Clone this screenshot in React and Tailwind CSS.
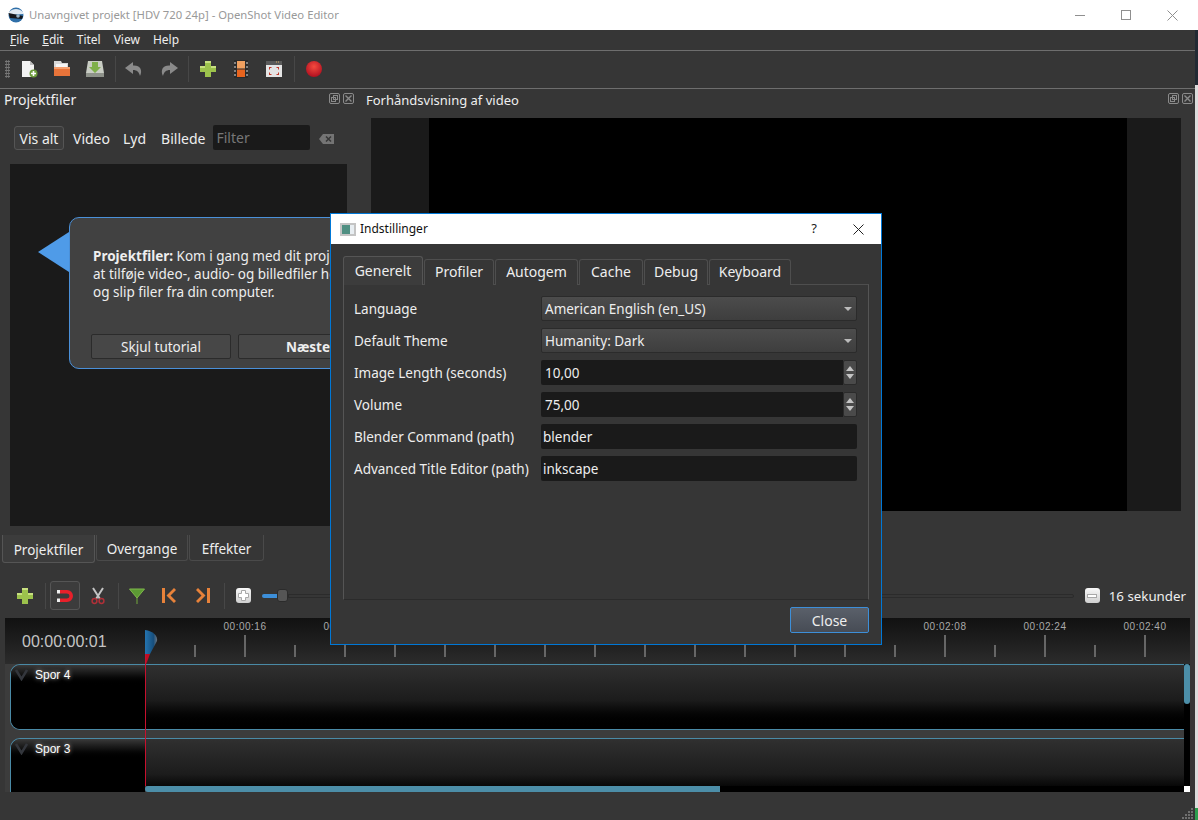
import React from "react";

const FONT = "font-['Noto_Sans',sans-serif]";

const Logo = () => (
  <svg width="16" height="16" viewBox="0 0 16 16">
    <circle cx="8" cy="8" r="7.5" fill="#2f6fa8" />
    <path d="M1 5 C5 1 11 1 15 5 L15 7 L1 8 Z" fill="#dfe9f2" />
    <path d="M0.5 6 L15 9 L14 12 L2 11 Z" fill="#15161a" />
    <circle cx="10" cy="9" r="1.8" fill="#9ab4c8" />
  </svg>
);

const NewFile = () => (
  <svg width="20" height="20" viewBox="0 0 20 20">
    <path d="M3 2 H11 L15 6 V18 H3 Z" fill="#f2f2f2" />
    <path d="M11 2 L15 6 H11 Z" fill="#bdbdbd" />
    <circle cx="14.5" cy="14.5" r="4" fill="#6d9c3c" />
    <path d="M14.5 12 V17 M12 14.5 H17" stroke="#fff" strokeWidth="1.6" />
  </svg>
);

const OpenFolder = () => (
  <svg width="20" height="20" viewBox="0 0 20 20">
    <path d="M2 2 H9 L10 4 H16 V10 H2 Z" fill="#d8d8d8" />
    <rect x="4" y="5" width="11" height="5" fill="#f5f5f5" />
    <path d="M2 8 H18 V17 H2 Z" fill="#e8743a" />
    <rect x="2" y="8" width="16" height="2" fill="#f5a070" />
  </svg>
);

const SaveIcon = () => (
  <svg width="20" height="20" viewBox="0 0 20 20">
    <path d="M3 2 H17 L19 14 V18 H1 V14 Z" fill="#c9cdc4" />
    <rect x="1" y="14" width="18" height="4" fill="#8e928a" />
    <path d="M7 3 H13 V8 H16 L10 14 L4 8 H7 Z" fill="#7fb04a" />
  </svg>
);

const ArrowBack = ({ flip }) => (
  <svg width="20" height="20" viewBox="0 0 20 20" className={flip ? "-scale-x-100" : ""}>
    <path d="M9 3 L1 9 L9 15 V11 C13 11 15 13 16 17 C19 11 16 6 9 6.5 Z" fill="#8a8a8a" />
  </svg>
);

const GreenPlus = () => (
  <svg width="18" height="18" viewBox="0 0 18 18">
    <path d="M6 1 H12 V6 H17 V12 H12 V17 H6 V12 H1 V6 H6 Z" fill="#9cc24c" />
    <path d="M6 1 H12 V3 H6 Z M1 6 H6 V8 H1 Z M12 6 H17 V8 H12 Z" fill="#c8e080" />
  </svg>
);

const FilmIcon = () => (
  <svg width="14" height="18" viewBox="0 0 14 18">
    <rect width="14" height="18" fill="#2a2a2a" />
    <rect x="3" y="1" width="8" height="7.5" fill="#f0a060" />
    <rect x="3" y="9.5" width="8" height="7.5" fill="#e8641e" />
    <path d="M1 2 V4 M1 6 V8 M1 10 V12 M1 14 V16 M13 2 V4 M13 6 V8 M13 10 V12 M13 14 V16" stroke="#ddd" strokeWidth="1" />
  </svg>
);

const WindowIcon = () => (
  <svg width="16" height="16" viewBox="0 0 16 16">
    <rect width="16" height="16" fill="#e4e4e4" />
    <rect width="16" height="4" fill="#5a5a5a" />
    <path d="M10 1 H14" stroke="#e0b060" strokeWidth="1" strokeDasharray="1 1" />
    <path d="M3 6 H5.5 V7 H4 V8.5 H3 Z M13 6 H10.5 V7 H12 V8.5 H13 Z M3 14 H5.5 V13 H4 V11.5 H3 Z M13 14 H10.5 V13 H12 V11.5 H13 Z" fill="#c0392b" />
  </svg>
);

const RecordIcon = () => (
  <svg width="18" height="18" viewBox="0 0 18 18">
    <defs>
      <radialGradient id="rec" cx="50%" cy="35%" r="65%">
        <stop offset="0%" stopColor="#f44a3e" />
        <stop offset="100%" stopColor="#b01020" />
      </radialGradient>
    </defs>
    <circle cx="9" cy="9" r="8" fill="url(#rec)" />
  </svg>
);

const DockIcons = () => (
  <div className="mb-[4px] flex gap-[3px]">
    <svg width="11" height="11" viewBox="0 0 11 11" fill="none" stroke="#8a8a8a">
      <rect x="0.5" y="0.5" width="10" height="10" rx="1.5" />
      <rect x="4.5" y="2.5" width="4" height="4" />
      <rect x="2.5" y="4.5" width="4" height="4" />
    </svg>
    <svg width="11" height="11" viewBox="0 0 11 11" fill="none" stroke="#8a8a8a">
      <rect x="0.5" y="0.5" width="10" height="10" rx="1.5" />
      <path d="M2.5 2.5 L8.5 8.5 M8.5 2.5 L2.5 8.5" strokeWidth="1.4" />
    </svg>
  </div>
);

const ClearIcon = () => (
  <svg width="15" height="10" viewBox="0 0 15 10">
    <path d="M4 0 H15 V10 H4 L0 5 Z" fill="#747474" />
    <path d="M7 2.5 L12 7.5 M12 2.5 L7 7.5" stroke="#363636" strokeWidth="1.5" />
  </svg>
);

const Magnet = () => (
  <svg width="16" height="14" viewBox="0 0 16 14">
    <path d="M3 1 H10 A6 6 0 0 1 10 13 H3 V9.5 H10 A2.5 2.5 0 0 0 10 4.5 H3 Z" fill="#e8202a" />
    <rect x="0" y="1" width="3" height="3.5" fill="#eee" />
    <rect x="0" y="9.5" width="3" height="3.5" fill="#eee" />
  </svg>
);

const Scissors = () => (
  <svg width="14" height="18" viewBox="0 0 14 18" fill="none">
    <path d="M2 1 L9 12 M12 1 L5 12" stroke="#c4c4c4" strokeWidth="2" />
    <circle cx="3.5" cy="14" r="2.4" stroke="#b03038" strokeWidth="1.5" />
    <circle cx="10.5" cy="14" r="2.4" stroke="#b03038" strokeWidth="1.5" />
  </svg>
);

const FilterIcon = () => (
  <svg width="16" height="16" viewBox="0 0 16 16">
    <path d="M0.5 1 H15.5 L8 10 Z" fill="#5c9a34" stroke="#7fb84a" strokeWidth="1" />
    <path d="M8 10 V16" stroke="#72a83c" strokeWidth="1" />
  </svg>
);

const MarkerIcon = ({ flip }) => (
  <svg width="14" height="15" viewBox="0 0 14 15" className={flip ? "-scale-x-100" : ""}>
    <rect x="0" y="0" width="3" height="15" fill="#e8823a" />
    <path d="M12 0 L14 2 L8.5 7.5 L14 13 L12 15 L4.5 7.5 Z" fill="#e8823a" />
  </svg>
);

const ZoomBtn = ({ minus }) => (
  <div className="flex h-[15px] w-[15px] items-center justify-center rounded-[3px] bg-gradient-to-b from-[#f8f8f8] to-[#d0d0d0]">
    {minus ? (
      <div className="h-[4px] w-[10px] border border-[#a8a8a8] bg-white" />
    ) : (
      <svg width="11" height="11" viewBox="0 0 11 11">
        <path d="M3.5 0.5 H7.5 V3.5 H10.5 V7.5 H7.5 V10.5 H3.5 V7.5 H0.5 V3.5 H3.5 Z" fill="#fff" stroke="#a8a8a8" />
      </svg>
    )}
  </div>
);

const ToolSep = ({ className }) => <div className={`h-[26px] w-px bg-[#474747] ${className}`} />;

const ToolCell = ({ children }) => (
  <div className="flex h-[30px] w-[33px] items-center justify-center">{children}</div>
);

const Underlined = ({ first, rest }) => (
  <span>
    <span className="underline">{first}</span>
    {rest}
  </span>
);

const WinControls = () => (
  <div className="flex items-center">
    <div className="flex w-[46px] justify-center">
      <div className="h-px w-[10px] bg-[#8f8f8f]" />
    </div>
    <div className="flex w-[46px] justify-center">
      <div className="h-[10px] w-[10px] border border-[#8f8f8f]" />
    </div>
    <div className="flex w-[46px] justify-center">
      <svg width="11" height="11" viewBox="0 0 11 11" stroke="#8f8f8f">
        <path d="M0.5 0.5 L10.5 10.5 M10.5 0.5 L0.5 10.5" />
      </svg>
    </div>
  </div>
);

const Tutorial = () => (
  <div className="absolute left-[28px] top-[53px] flex">
    <div className="mt-[15px] h-0 w-0 border-y-[20px] border-r-[31px] border-y-transparent border-r-[#4f9be8]" />
    <div className="h-[152px] w-[340px] rounded-[10px] border border-[#4a90d9] bg-[#414141] pl-[23px] pt-[29px] text-[13.5px] leading-[18px] text-[#eeeeee]">
      <p>
        <b>Projektfiler:</b> Kom i gang med dit projekt ved
      </p>
      <p>at tilføje video-, audio- og billedfiler her. Træk</p>
      <p>og slip filer fra din computer.</p>
      <div className="ml-[-2px] mt-[33px] flex gap-[7px]">
        <div className="flex h-[25px] w-[140px] items-center justify-center rounded-[2px] border border-[#2b2b2b] bg-[#474747]">
          Skjul tutorial
        </div>
        <div className="flex h-[25px] w-[140px] items-center justify-center rounded-[2px] border border-[#2b2b2b] bg-[#474747] font-bold">
          Næste
        </div>
      </div>
    </div>
  </div>
);

const ProjectPane = () => (
  <div className="relative w-[360px]">
    <div className="flex h-[23px] items-center justify-between pl-1 pr-[6px]">
      <span className="pb-[2px] text-[14px] text-[#eeeeee]">Projektfiler</span>
      <DockIcons />
    </div>
    <div className="mt-[13px] flex h-[25px] items-center pl-[14px] text-[14px] text-[#eeeeee]">
      <div className="flex h-[24px] w-[50px] items-center justify-center rounded-[3px] border border-[#555555] bg-[#3c3c3c] pt-[2px]">Vis alt</div>
      <span className="ml-[9px] pt-[2px]">Video</span>
      <span className="ml-[13px] pt-[2px]">Lyd</span>
      <span className="ml-[15px] pt-[2px]">Billede</span>
      <div className="ml-[8px] flex h-[25px] w-[97px] items-center rounded-[2px] bg-[#1a1a1a] pl-[3px] text-[#777777]">Filter</div>
      <div className="ml-[9px] mt-[2px]">
        <ClearIcon />
      </div>
    </div>
    <div className="relative ml-[10px] mt-[14px] h-[362px] w-[337px] bg-[#1a1a1a]">
      <Tutorial />
    </div>
    <div className="mt-[9px] flex items-start gap-px pl-[2px] text-[13.5px] text-[#eeeeee]">
      <div className="flex h-[28px] w-[93px] items-center justify-center rounded-b-[3px] border border-t-0 border-[#555555] bg-[#3c3c3c] pt-[3px]">Projektfiler</div>
      <div className="flex h-[26px] w-[92px] items-center justify-center rounded-b-[3px] border border-t-0 border-[#4a4a4a] bg-[#363636] pt-[3px]">Overgange</div>
      <div className="flex h-[26px] w-[75px] items-center justify-center rounded-b-[3px] border border-t-0 border-[#4a4a4a] bg-[#363636] pt-[3px]">Effekter</div>
    </div>
  </div>
);

const PreviewPane = () => (
  <div className="flex-1">
    <div className="flex h-[23px] items-center justify-between pl-[6px] pr-[2px]">
      <span className="text-[13px] text-[#eeeeee]">Forhåndsvisning af video</span>
      <DockIcons />
    </div>
    <div className="ml-[11px] mt-[6px] h-[393px] w-[810px] bg-[#1a1a1a] pl-[58px]">
      <div className="h-full w-[698px] bg-black" />
    </div>
  </div>
);

const TICKS = [
  null, "00:00:16", null, "00:00:32", null, "00:00:48", null, "00:01:04", null, "00:01:20",
  null, "00:01:36", null, "00:01:52", null, "00:02:08", null, "00:02:24", null, "00:02:40",
];

const Ruler = () => (
  <div className="flex h-[46px] bg-gradient-to-b from-[#111111] to-[#2c2c2c]">
    <div className="w-[165px] shrink-0 pl-[17px] pt-[13px] font-['Liberation_Sans',sans-serif] text-[16px] leading-[22px] text-[#c4c4c4]">00:00:00:01</div>
    <div className="flex font-['Liberation_Sans',sans-serif]">
      {TICKS.map((label, i) => (
        <div key={i} className="flex h-[39px] w-[50px] flex-col items-center justify-end">
          {label && <span className="mb-[3px] text-[10px] leading-[11px] tracking-[0.5px] text-[#aaaaaa]">{label}</span>}
          <div className={`w-[2px] bg-[#666666] ${label ? "h-[22px]" : "h-[12px]"}`} />
        </div>
      ))}
    </div>
  </div>
);

const Track = ({ name }) => (
  <div className="flex h-[66px] shrink-0 overflow-hidden rounded-l-[10px] border-y border-l border-[#4a8aa6] bg-gradient-to-b from-[#303030] via-[#1c1c1c] via-[55%] to-[#000000]">
    <div className="w-[135px] shrink-0 bg-gradient-to-b from-[#3a3a3a] via-black via-[32%] to-black">
      <div className="flex items-center pl-[4px] pt-[1px]">
        <svg width="13" height="12" viewBox="0 0 13 12" fill="none" stroke="#33363c" strokeWidth="2.5">
          <path d="M1 1 L6.5 10 L12 1" />
        </svg>
        <span className="ml-[7px] font-['Liberation_Sans',sans-serif] text-[12px] leading-[18px] text-white [text-shadow:0_0_4px_#bbbbbb]">{name}</span>
      </div>
    </div>
  </div>
);

const Timeline = () => (
  <div className="relative ml-[5px] h-[174px] w-[1185px] bg-[#3c3c3c]">
    <Ruler />
    <div className="flex h-[122px]">
      <div className="flex flex-1 flex-col gap-[8px] overflow-hidden pl-[5px]">
        <Track name="Spor 4" />
        <Track name="Spor 3" />
      </div>
      <div className="w-[6px] bg-black">
        <div className="h-[40px] rounded-[3px] bg-[#4c8ea8]" />
      </div>
    </div>
    <div className="flex h-[6px] pl-[5px]">
      <div className="w-[135px] border-l border-[#4a8aa6] bg-black" />
      <div className="w-[575px] rounded-l-[3px] bg-[#4c8ea8]" />
      <div className="flex-1 bg-black" />
      <div className="w-[6px] bg-white" />
    </div>
    {/* playhead */}
    <div className="absolute left-[140px] top-[12px]">
      <svg width="13" height="156" viewBox="0 0 13 156">
        <defs>
          <linearGradient id="head" x1="0" x2="1" y1="0" y2="0">
            <stop offset="0%" stopColor="#2474b0" />
            <stop offset="70%" stopColor="#174f7d" />
            <stop offset="100%" stopColor="#6a7480" />
          </linearGradient>
        </defs>
        <path d="M0 0 C8 1 13 6 12 11 L5 24 L0 26 Z" fill="url(#head)" />
        <path d="M0 24 L5 24 L2 32 L0 36 Z" fill="#c00d24" />
        <path d="M0.5 24 V156" stroke="#c8102e" strokeWidth="1" />
      </svg>
    </div>
  </div>
);

const DIALOG_TABS = [
  ["Profiler", "w-[70px]"],
  ["Autogem", "w-[83px]"],
  ["Cache", "w-[64px]"],
  ["Debug", "w-[64px]"],
  ["Keyboard", "w-[82px]"],
];

const Combo = ({ value }) => (
  <div className="flex h-[25px] w-[316px] items-center justify-between rounded-[2px] border border-[#2b2b2b] bg-gradient-to-b from-[#4c4c4c] to-[#3e3e3e] pl-[3px] pr-[4px]">
    <span className="pt-[2px]">{value}</span>
    <div className="h-0 w-0 border-x-[4px] border-t-[4px] border-x-transparent border-t-[#bbbbbb]" />
  </div>
);

const Spin = ({ value }) => (
  <div className="flex h-[25px] w-[316px]">
    <div className="flex flex-1 items-center rounded-l-[2px] bg-[#1a1a1a] pl-[4px] pt-[2px]">{value}</div>
    <div className="flex w-[14px] flex-col items-center justify-center gap-[3px] rounded-[2px] border border-[#2b2b2b] bg-[#4a4a4a]">
      <div className="h-0 w-0 border-x-[4px] border-b-[5px] border-x-transparent border-b-[#c4c4c4]" />
      <div className="h-0 w-0 border-x-[4px] border-t-[5px] border-x-transparent border-t-[#c4c4c4]" />
    </div>
  </div>
);

const TextField = ({ value }) => (
  <div className="flex h-[25px] w-[316px] items-center rounded-[2px] bg-[#1a1a1a] pl-[2px] pt-[2px]">{value}</div>
);

const SETTINGS = [
  ["Language", <Combo value="American English (en_US)" />],
  ["Default Theme", <Combo value="Humanity: Dark" />],
  ["Image Length (seconds)", <Spin value="10,00" />],
  ["Volume", <Spin value="75,00" />],
  ["Blender Command (path)", <TextField value="blender" />],
  ["Advanced Title Editor (path)", <TextField value="inkscape" />],
];

const SettingsDialog = () => (
  <div className="absolute left-[330px] top-[213px] h-[432px] w-[552px] border border-[#0078d7] bg-[#363636]">
    <div className="flex h-[30px] items-center bg-white pl-[9px]">
      <svg width="16" height="13" viewBox="0 0 16 13">
        <rect width="16" height="13" fill="#c4c4c4" />
        <rect x="2" y="2" width="8" height="9" fill="#4f8f82" />
        <rect x="10" y="2" width="4" height="9" fill="#e8eef2" />
      </svg>
      <span className="ml-[4px] text-[12px] text-[#111111]">Indstillinger</span>
      <span className="ml-auto mr-[36px] text-[13px] text-[#222222]">?</span>
      <svg className="mr-[17px]" width="11" height="11" viewBox="0 0 11 11" stroke="#222222">
        <path d="M0.5 0.5 L10.5 10.5 M10.5 0.5 L0.5 10.5" />
      </svg>
    </div>
    <div className="pl-[12px] pt-[12px] text-[14px] text-[#eeeeee]">
      <div className="relative z-10 flex h-[29px] items-end gap-px">
        <div className="flex h-[29px] w-[80px] items-center justify-center rounded-t-[3px] border border-b-0 border-[#555555] bg-[#3c3c3c] pb-[2px]">Generelt</div>
        {DIALOG_TABS.map(([name, width]) => (
          <div key={name} className={`flex h-[26px] items-center justify-center rounded-t-[3px] border border-b-0 border-[#4e4e4e] bg-[#363636] pb-[2px] ${width}`}>
            {name}
          </div>
        ))}
      </div>
      <div className="-mt-px h-[316px] w-[526px] border border-x-[#555555] border-b-[#2b2b2b] border-t-[#4e4e4e] pl-[10px] pt-[11px] text-[13.5px]">
        <div className="flex flex-col gap-[7px]">
          {SETTINGS.map(([label, field]) => (
            <div key={label} className="flex items-center">
              <span className="w-[187px] whitespace-nowrap pt-[2px]">{label}</span>
              {field}
            </div>
          ))}
        </div>
      </div>
      <div className="mt-[7px] flex w-[526px] justify-end">
        <div className="flex h-[26px] w-[79px] items-center justify-center rounded-[2px] border border-[#3d8fd9] bg-gradient-to-b from-[#5a606a] to-[#474c55]">Close</div>
      </div>
    </div>
  </div>
);

const App = () => (
  <div className={`relative flex h-[820px] w-[1198px] overflow-hidden ${FONT}`}>
    <div className="flex w-[1195px] flex-col bg-[#363636]">
      <div className="flex h-[30px] shrink-0 items-center justify-between bg-white pl-[8px]">
        <div className="flex items-center">
          <Logo />
          <span className="ml-[5px] text-[11.3px] text-[#999999]">Unavngivet projekt [HDV 720 24p] - OpenShot Video Editor</span>
        </div>
        <WinControls />
      </div>
      <div className="flex h-[21px] shrink-0 items-center gap-[13px] border-b border-[#6e6e6e] pl-[10px] text-[12px] text-[#eeeeee]">
        <Underlined first="F" rest="ile" />
        <Underlined first="E" rest="dit" />
        <span>Titel</span>
        <span>View</span>
        <span>Help</span>
      </div>
      <div className="flex h-[38px] shrink-0 items-center border-b border-[#6e6e6e] pb-px pl-[5px]">
        <div className="mr-[2px] h-[18px] w-[5px] bg-[radial-gradient(#777777_1px,transparent_1px)] bg-[length:2.5px_3px]" />
        <ToolCell><NewFile /></ToolCell>
        <ToolCell><OpenFolder /></ToolCell>
        <ToolCell><SaveIcon /></ToolCell>
        <ToolSep className="ml-[4px] mr-[1px]" />
        <ToolCell><ArrowBack /></ToolCell>
        <div className="w-[2px]" />
        <ToolCell><ArrowBack flip /></ToolCell>
        <ToolSep className="ml-[3px] mr-[2px]" />
        <ToolCell><GreenPlus /></ToolCell>
        <ToolCell><FilmIcon /></ToolCell>
        <ToolCell><WindowIcon /></ToolCell>
        <ToolSep className="ml-[4px] mr-[2px]" />
        <ToolCell><RecordIcon /></ToolCell>
      </div>
      <div className="flex h-[474px] shrink-0">
        <ProjectPane />
        <PreviewPane />
      </div>
      <div className="mb-[8px] mt-[18px] flex h-[29px] shrink-0 items-center pl-[10px] text-[13.3px] text-[#eeeeee]">
        <div className="flex w-[30px] justify-center"><GreenPlus /></div>
        <ToolSep className="ml-[5px]" />
        <div className="ml-[4px] flex h-[29px] w-[30px] items-center justify-center rounded-[3px] border border-[#555555] bg-[#3c3c3c]"><Magnet /></div>
        <div className="ml-[3px] flex w-[30px] justify-center"><Scissors /></div>
        <ToolSep className="ml-[5px]" />
        <div className="ml-[3px] flex w-[30px] justify-center"><FilterIcon /></div>
        <div className="ml-[2px] flex w-[30px] justify-center"><MarkerIcon /></div>
        <div className="ml-[4px] flex w-[30px] justify-center"><MarkerIcon flip /></div>
        <ToolSep className="ml-[6px]" />
        <div className="ml-[3px] flex w-[30px] justify-center"><ZoomBtn /></div>
        <div className="ml-[4px] flex flex-1 items-center">
          <div className="h-[4px] w-[15px] rounded-l-[2px] bg-[#3d8fd9]" />
          <div className="h-[13px] w-[11px] rounded-[3px] border border-[#2b2b2b] bg-[#555555]" />
          <div className="h-[4px] flex-1 rounded-r-[2px] border border-[#2b2b2b] bg-[#363636]" />
        </div>
        <div className="ml-[11px]"><ZoomBtn minus /></div>
        <span className="ml-[9px] mr-[9px] whitespace-nowrap pt-[3px]">16 sekunder</span>
      </div>
      <Timeline />
      <div className="flex flex-1 items-end justify-end pr-px">
        <svg width="13" height="13" viewBox="0 0 13 13" fill="#6e6e6e">
          <rect x="10" y="1" width="2" height="2" />
          <rect x="7" y="4" width="2" height="2" />
          <rect x="10" y="4" width="2" height="2" />
          <rect x="4" y="7" width="2" height="2" />
          <rect x="7" y="7" width="2" height="2" />
          <rect x="10" y="7" width="2" height="2" />
          <rect x="1" y="10" width="2" height="2" />
          <rect x="4" y="10" width="2" height="2" />
          <rect x="7" y="10" width="2" height="2" />
          <rect x="10" y="10" width="2" height="2" />
        </svg>
      </div>
    </div>
    <div className="flex w-[3px] flex-col bg-[#dcdcdc]">
      <div className="h-[30px] bg-white" />
      <div className="h-[55px] bg-[#222a33]" />
      <div className="flex-1" />
      <div className="h-[12px] bg-[#2d9e4e]" />
    </div>
    <SettingsDialog />
  </div>
);

export default App;
